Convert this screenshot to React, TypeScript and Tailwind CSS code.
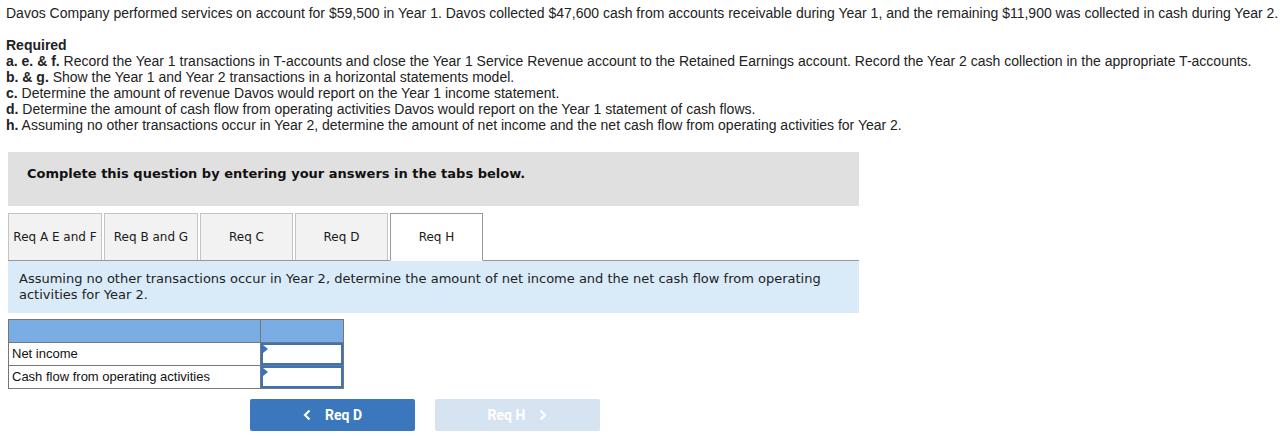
import React from "react";

const tabs = ["Req A E and F", "Req B and G", "Req C", "Req D", "Req H"];
const tabWidths = ["w-[94px]", "w-[94px]", "w-[93px]", "w-[93px]", "w-[93px]"];

function InputCell() {
  return (
    <div className="relative h-full w-full border-2 border-[#3b73b9] bg-white">
      <div className="absolute left-0 top-0 h-0 w-0 border-y-[4px] border-l-[5px] border-y-transparent border-l-[#3b73b9]" />
    </div>
  );
}

export default function App() {
  return (
    <div className="w-[1286px] h-[436px] bg-white text-black overflow-hidden">
      <div className="pl-[6px] pt-[5px] font-['Liberation_Sans',Arial,sans-serif] text-[14px] leading-[16px] text-[#222]">
        <p className="whitespace-nowrap">
          Davos Company performed services on account for $59,500 in Year 1. Davos collected $47,600 cash from accounts receivable during Year 1, and the remaining $11,900 was collected in cash during Year 2.
        </p>
        <p className="mt-[16px] font-bold">Required</p>
        <p className="whitespace-nowrap"><b>a. e. &amp; f.</b> Record the Year 1 transactions in T-accounts and close the Year 1 Service Revenue account to the Retained Earnings account. Record the Year 2 cash collection in the appropriate T-accounts.</p>
        <p><b>b. &amp; g.</b> Show the Year 1 and Year 2 transactions in a horizontal statements model.</p>
        <p><b>c.</b> Determine the amount of revenue Davos would report on the Year 1 income statement.</p>
        <p><b>d.</b> Determine the amount of cash flow from operating activities Davos would report on the Year 1 statement of cash flows.</p>
        <p><b>h.</b> Assuming no other transactions occur in Year 2, determine the amount of net income and the net cash flow from operating activities for Year 2.</p>
      </div>

      <div className="ml-[8px] mt-[19px] w-[851px] font-['DejaVu_Sans',Verdana,sans-serif]">
        <div className="h-[54px] bg-[#e0e0e0] pl-[19px] pt-[14px] text-[13px] leading-[16px] font-bold text-[#111]">
          Complete this question by entering your answers in the tabs below.
        </div>

        <div className="mt-[7px] flex items-end gap-[2px] border-b border-[#999] h-[48px]">
          {tabs.map((t, i) => {
            const active = i === tabs.length - 1;
            return (
              <div
                key={t}
                className={
                  (active
                    ? "bg-white border border-[#999] border-b-white -mb-px h-[48px] "
                    : "bg-[#f2f2f2] border border-b-0 border-[#c4c4c4] h-[47px] ") +
                  tabWidths[i] +
                  " flex items-center justify-center text-[12px] text-[#1a1a1a] whitespace-nowrap"
                }
              >
                {t}
              </div>
            );
          })}
        </div>

        <div className="h-[52px] bg-[#d9ebf9] px-[11px] pt-[10px] text-[13px] leading-[16px] text-[#222]">
          Assuming no other transactions occur in Year 2, determine the amount of net income and the net cash flow from operating activities for Year 2.
        </div>
      </div>

      <div className="ml-[8px] mt-[6px] w-[336px] font-['Liberation_Sans',Arial,sans-serif] text-[13px] text-[#111]">
        <div className="grid grid-cols-[252px_82px] border border-[#777]">
          <div className="h-[22px] bg-[#7aade3] border-r border-[#777]" />
          <div className="h-[22px] bg-[#7aade3]" />
          <div className="h-[23px] flex items-center pl-[3px] border-t border-r border-[#777]">Net income</div>
          <div className="h-[23px] border-t border-[#777]"><InputCell /></div>
          <div className="h-[23px] flex items-center pl-[3px] border-t border-r border-[#777]">Cash flow from operating activities</div>
          <div className="h-[23px] border-t border-[#777]"><InputCell /></div>
        </div>
      </div>

      <div className="ml-[250px] mt-[10px] flex gap-[20px] font-['Roboto',sans-serif] text-[14px] font-bold text-white">
        <div className="flex h-[32px] w-[165px] items-center justify-center gap-[14px] rounded-[2px] bg-[#3a77bc]">
          <svg width="8" height="12" viewBox="0 0 8 12"><path d="M6.5 1.5 2 6l4.5 4.5" fill="none" stroke="white" strokeWidth="2.2" /></svg>
          <span>Req D</span>
        </div>
        <div className="flex h-[32px] w-[165px] items-center justify-center gap-[14px] rounded-[2px] bg-[#d6e3f1]">
          <span>Req H</span>
          <svg width="8" height="12" viewBox="0 0 8 12"><path d="M1.5 1.5 6 6l-4.5 4.5" fill="none" stroke="white" strokeWidth="2.2" /></svg>
        </div>
      </div>
    </div>
  );
}
